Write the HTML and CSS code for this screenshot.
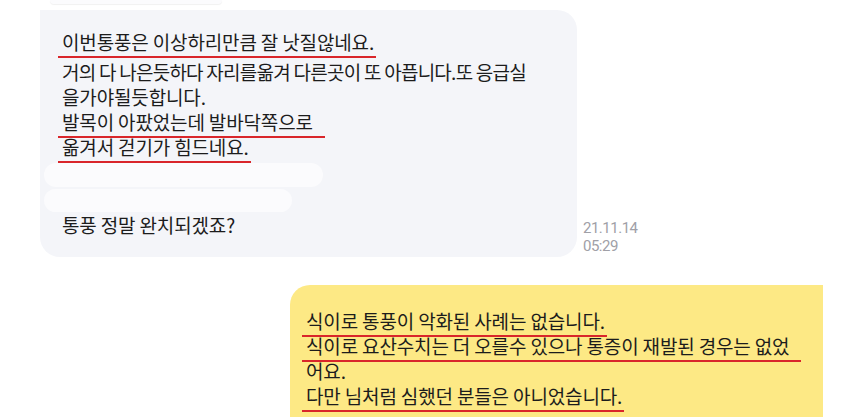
FILE: index.html
```html
<!DOCTYPE html>
<html>
<head>
    <title>통풍 상담</title>
    <link rel="stylesheet" href="styles.css">
</head>
<body>
    <div class="chat">
        <div class="prev-tail"></div>

        <div class="row row-in">
            <div class="bubble bubble-in">
                <div class="line first"><span class="mark">이번통풍은 이상하리만큼 잘 낫질않네요.</span></div>
                <div class="line tight">거의 다 나은듯하다 자리를옮겨 다른곳이 또 아픕니다.또 응급실</div>
                <div class="line">을가야될듯합니다.</div>
                <div class="line"><span class="mark long">발목이 아팠었는데 발바닥쪽으로</span></div>
                <div class="line"><span class="mark">옮겨서 걷기가 힘드네요.</span></div>
                <div class="blank blank-1"></div>
                <div class="blank blank-2"></div>
                <div class="line">통풍 정말 완치되겠죠?</div>
            </div>
            <div class="time">21.11.14<br>05:29</div>
        </div>

        <div class="row row-out">
            <div class="bubble bubble-out">
                <div class="line"><span class="mark">식이로 통풍이 악화된 사례는 없습니다.</span></div>
                <div class="line"><span class="mark long">식이로 요산수치는 더 오를수 있으나 통증이 재발된 경우는 없었</span></div>
                <div class="line">어요.</div>
                <div class="line"><span class="mark">다만 님처럼 심했던 분들은 아니었습니다.</span></div>
            </div>
        </div>
    </div>
</body>
</html>
```

FILE: styles.css
```css
body {
    margin: 0;
    background: #fff;
    color: #1c1c1c;
    font-family: "Noto Sans CJK KR", "Noto Sans", sans-serif;
    overflow: hidden;
}

.chat {
    display: flex;
    flex-direction: column;
}

/* bottom edge of the previous message */
.prev-tail {
    width: 172px;
    height: 4px;
    margin-left: 50px;
    background: #fbfbfd;
    border-radius: 0 0 12px 12px;
    box-shadow: 0 1px 1px rgba(0, 0, 0, 0.06);
}

.row {
    display: flex;
    align-items: flex-end;
}

.row-in {
    margin-top: 6px;
    padding-left: 40px;
}

.row-out {
    margin-top: 28px;
    justify-content: flex-end;
    padding-right: 34px;
}

.bubble {
    font-size: 19px;
    letter-spacing: -0.15px;
}

.bubble-in {
    width: 537px;
    height: 247px;
    box-sizing: border-box;
    padding: 19px 0 0 22px;
    background: #f4f5f9;
    border-radius: 0 20px 20px 20px;
}

.bubble-out {
    width: 533px;
    height: 160px;
    box-sizing: border-box;
    padding: 23px 0 0 16px;
    background: #fde985;
    border-radius: 20px 0 0 0;
}

.line {
    line-height: 25px;
    white-space: nowrap;
}

.line.tight {
    letter-spacing: -0.75px;
}

.line.first {
    margin-bottom: 5px;
}

/* red marker strokes under quoted sentences */
.mark {
    display: inline-block;
    margin-left: -4px;
    padding: 0 2px 4px 4px;
    margin-bottom: -4px;
    background: linear-gradient(#d9262b, #d9262b) no-repeat left bottom / 100% 2.5px;
}

.mark.long {
    padding-right: 12px;
}

.blank {
    height: 24px;
    margin-left: -18px;
    background: #fbfbfd;
    border-radius: 12px;
}

.blank-1 {
    width: 279px;
    margin-top: 4px;
}

.blank-2 {
    width: 248px;
    height: 23px;
    margin-top: 2px;
}

.time {
    margin-left: 6px;
    padding-bottom: 2px;
    font-family: Roboto, sans-serif;
    font-size: 15px;
    line-height: 18px;
    letter-spacing: -0.5px;
    color: #a0a0a7;
}
```
